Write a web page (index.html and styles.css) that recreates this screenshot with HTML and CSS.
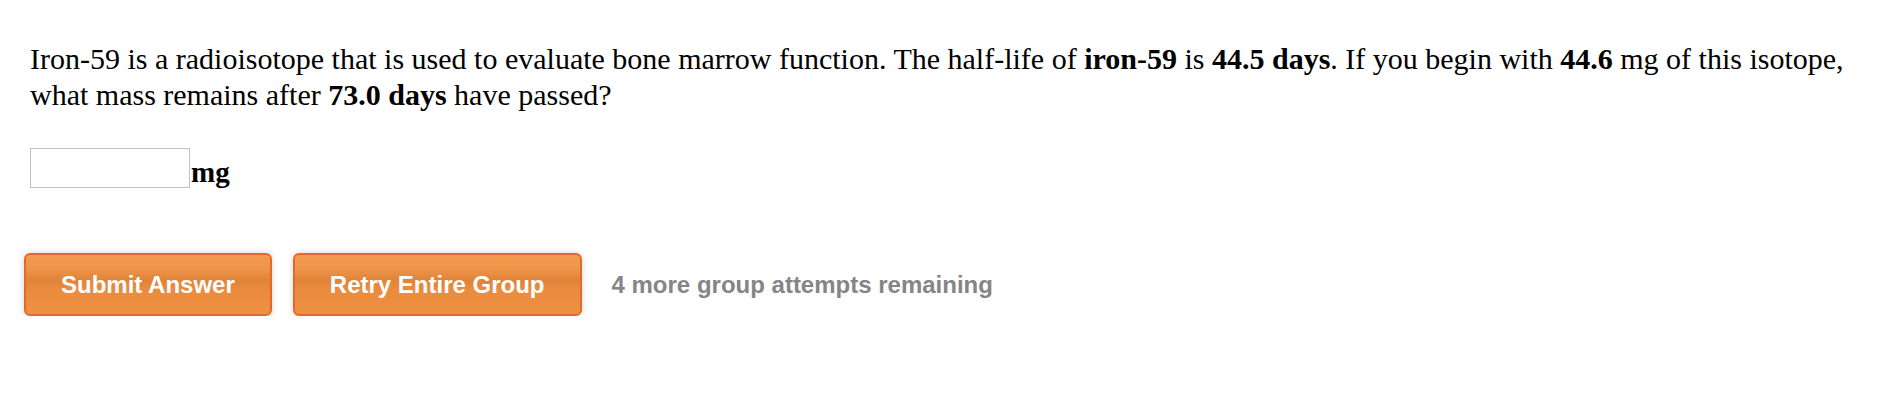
FILE: index.html
```html
<!DOCTYPE html>
<html lang="en">
<head>
<meta charset="utf-8">
<title>Question</title>
<link rel="stylesheet" href="styles.css">
</head>
<body>
<div class="page">
  <p class="question">Iron-59 is a radioisotope that is used to evaluate bone marrow function. The half-life of <b>iron-59</b> is <b>44.5 days</b>. If you begin with <b>44.6</b> mg of this isotope, what mass remains after <b>73.0 days</b> have passed?</p>
  <div class="answer">
    <input class="answer-input" type="text" aria-label="answer">
    <span class="unit">mg</span>
  </div>
  <div class="actions">
    <button class="btn" type="button">Submit Answer</button>
    <button class="btn" type="button">Retry Entire Group</button>
    <span class="attempts">4 more group attempts remaining</span>
  </div>
</div>
</body>
</html>
```
FILE: styles.css
```css
html, body {
  margin: 0;
  padding: 0;
  background: #ffffff;
}

.page {
  padding: 41px 40px 0 30px;
  font-family: "Liberation Serif", "Times New Roman", serif;
  color: #000000;
}

.question {
  margin: 0;
  font-size: 30px;
  line-height: 36px;
}

.question b {
  font-weight: bold;
}

.answer {
  margin-top: 35px;
  display: flex;
  align-items: flex-end;
}

.answer-input {
  box-sizing: border-box;
  width: 160px;
  height: 40px;
  margin: 0;
  border: 1px solid #c2c2c2;
  border-radius: 0;
  background: #ffffff;
  padding: 0 6px;
  font-size: 24px;
}

.unit {
  font-weight: bold;
  font-size: 29px;
  line-height: 28px;
  margin-left: 1px;
  margin-bottom: 2px;
}

.actions {
  margin-top: 65px;
  margin-left: -6px;
  display: flex;
  align-items: center;
  gap: 21px;
}

.btn {
  box-sizing: border-box;
  height: 63px;
  padding: 0 35px;
  border: 2px solid #e2692b;
  border-radius: 6px;
  background: linear-gradient(to bottom, #f29b4d 0%, #f0964a 22%, #df8337 42%, #ea8b3d 58%, #ee9142 100%);
  box-shadow: 0 0 6px rgba(0, 0, 0, 0.18);
  color: #ffffff;
  font-family: "Liberation Sans", Arial, Helvetica, sans-serif;
  font-weight: bold;
  font-size: 24px;
  cursor: pointer;
}

.attempts {
  margin-left: 9px;
  font-family: "Liberation Sans", Arial, Helvetica, sans-serif;
  font-weight: bold;
  font-size: 24px;
  color: #858585;
}
```
